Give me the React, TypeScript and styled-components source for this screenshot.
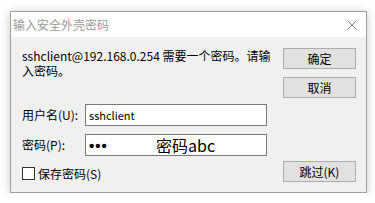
import React from "react";
import styled, { createGlobalStyle } from "styled-components";

const GlobalStyle = createGlobalStyle`
  html, body {
    margin: 0;
    padding: 0;
    background: #ffffff;
  }
  body {
    font-family: "Noto Sans CJK SC", "Liberation Sans", sans-serif;
    font-size: 12px;
    color: #000;
  }
`;

const Page = styled.div`
  padding: 11px 0 0 10px;
`;

const Dialog = styled.div`
  width: 355px;
  border: 1px solid #a0a0a0;
  background: #f0f0f0;
  box-shadow: 0 1px 9px rgba(0, 0, 0, 0.22);
`;

const TitleBar = styled.div`
  height: 25px;
  background: #ffffff;
  display: flex;
  align-items: center;
  justify-content: space-between;
  padding: 0 9px 0 2px;
`;

const Title = styled.span`
  color: #9a9a9a;
  font-size: 12px;
  line-height: 25px;
`;

const CloseIcon = styled.svg`
  width: 10px;
  height: 10px;
  display: block;
`;

const Body = styled.div`
  display: flex;
  padding: 11px 10px 10px 11px;
  height: 134px;
`;

const LeftColumn = styled.div`
  flex: 1;
  display: flex;
  flex-direction: column;
`;

const Message = styled.div`
  line-height: 15px;
`;

const Line = styled.div`
  height: 15px;
  white-space: nowrap;
`;

const Form = styled.div`
  margin-top: 26px;
  display: grid;
  grid-template-columns: 63px 182px;
  row-gap: 8px;
  align-items: center;
`;

const Label = styled.span`
  line-height: 22px;
`;

const Field = styled.div`
  height: 22px;
  box-sizing: border-box;
  border: 1px solid #7a7a7a;
  background: #ffffff;
  display: flex;
  align-items: center;
  padding: 0 3px;
  overflow: hidden;
  white-space: nowrap;
  font-size: 11px;
`;

const Dots = styled.span`
  font-family: "Liberation Sans", sans-serif;
  font-size: 15px;
  font-weight: bold;
  letter-spacing: 1px;
  width: 67px;
  flex: none;
`;

const Overlay = styled.span`
  font-size: 16px;
  line-height: 20px;
`;

const CheckRow = styled.label`
  grid-column: 1 / span 2;
  display: flex;
  align-items: center;
  gap: 3px;
  margin-top: 1px;
`;

const CheckBox = styled.span`
  width: 13px;
  height: 13px;
  box-sizing: border-box;
  border: 1px solid #333333;
  background: #ffffff;
  flex: none;
`;

const RightColumn = styled.div`
  width: 73px;
  display: flex;
  flex-direction: column;
  gap: 8px;
`;

const Button = styled.button<{ $bottom?: boolean }>`
  width: 73px;
  height: 21px;
  box-sizing: border-box;
  border: 1px solid #adadad;
  background: #e1e1e1;
  font-family: inherit;
  font-size: 12px;
  color: #000;
  padding: 0;
  line-height: 19px;
  margin-top: ${(p) => (p.$bottom ? "auto" : "0")};
`;

export default function App() {
  return (
    <>
      <GlobalStyle />
      <Page>
        <Dialog>
          <TitleBar>
            <Title>输入安全外壳密码</Title>
            <CloseIcon viewBox="0 0 10 10">
              <path d="M0.5 0.5 L9.5 9.5 M9.5 0.5 L0.5 9.5" stroke="#8a8a8a" strokeWidth="1" />
            </CloseIcon>
          </TitleBar>
          <Body>
            <LeftColumn>
              <Message>
                <Line>sshclient@192.168.0.254 需要一个密码。请输</Line>
                <Line>入密码。</Line>
              </Message>
              <Form>
                <Label>用户名(U):</Label>
                <Field>sshclient</Field>
                <Label>密码(P):</Label>
                <Field>
                  <Dots>•••</Dots>
                  <Overlay>密码abc</Overlay>
                </Field>
                <CheckRow>
                  <CheckBox />
                  保存密码(S)
                </CheckRow>
              </Form>
            </LeftColumn>
            <RightColumn>
              <Button>确定</Button>
              <Button>取消</Button>
              <Button $bottom>跳过(K)</Button>
            </RightColumn>
          </Body>
        </Dialog>
      </Page>
    </>
  );
}
